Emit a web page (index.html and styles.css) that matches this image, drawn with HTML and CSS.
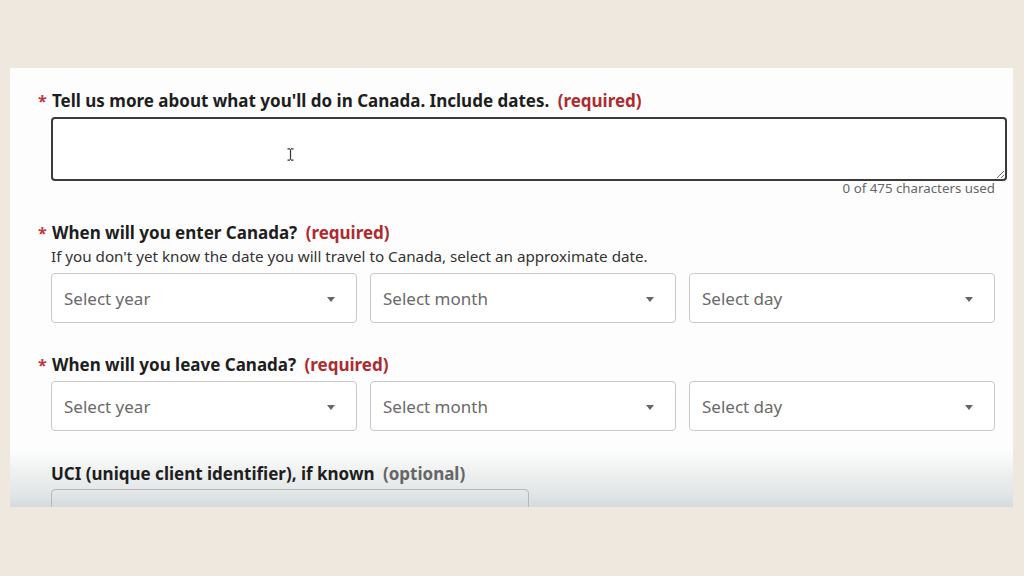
FILE: index.html
```html
<!DOCTYPE html>
<html lang="en">
<head>
<meta charset="utf-8">
<title>Visit details</title>
<link rel="stylesheet" href="styles.css">
</head>
<body>
<main class="panel">
  <div class="form">
    <div class="group">
      <label class="label" for="purpose"><span class="star">*</span>Tell us more about what you'll do in Canada. Include dates. <span class="req">(required)</span></label>
      <textarea id="purpose" class="textarea"></textarea>
      <div class="count">0 of 475 characters used</div>
    </div>

    <div class="group gap-lg">
      <div class="label"><span class="star">*</span>When will you enter Canada? <span class="req">(required)</span></div>
      <div class="hint">If you don't yet know the date you will travel to Canada, select an approximate date.</div>
      <div class="selects hinted">
        <div class="select"><span>Select year</span><svg class="caret" width="8" height="5" viewBox="0 0 8 5"><path d="M0 0h8L4 5z"/></svg></div>
        <div class="select"><span>Select month</span><svg class="caret" width="8" height="5" viewBox="0 0 8 5"><path d="M0 0h8L4 5z"/></svg></div>
        <div class="select"><span>Select day</span><svg class="caret" width="8" height="5" viewBox="0 0 8 5"><path d="M0 0h8L4 5z"/></svg></div>
      </div>
    </div>

    <div class="group gap-xl">
      <div class="label"><span class="star">*</span>When will you leave Canada? <span class="req">(required)</span></div>
      <div class="selects">
        <div class="select"><span>Select year</span><svg class="caret" width="8" height="5" viewBox="0 0 8 5"><path d="M0 0h8L4 5z"/></svg></div>
        <div class="select"><span>Select month</span><svg class="caret" width="8" height="5" viewBox="0 0 8 5"><path d="M0 0h8L4 5z"/></svg></div>
        <div class="select"><span>Select day</span><svg class="caret" width="8" height="5" viewBox="0 0 8 5"><path d="M0 0h8L4 5z"/></svg></div>
      </div>
    </div>

    <div class="group gap-xxl">
      <div class="label">UCI (unique client identifier), if known <span class="opt">(optional)</span></div>
      <div class="input"></div>
    </div>
  </div>

  <svg class="ibeam" width="7" height="13" viewBox="0 0 7 13"><path d="M0.5 0.8h2.5M4 0.8h2.5M3.5 1.2v10.6M0.5 12.2h2.5M4 12.2h2.5" stroke="#333" stroke-width="1.2" fill="none"/></svg>
</main>
</body>
</html>
```

FILE: styles.css
```css
* { box-sizing: border-box; }

html, body {
  margin: 0;
  padding: 0;
}

body {
  background: #efe8de;
  font-family: "Noto Sans", "Open Sans", sans-serif;
  color: #222;
  width: 1024px;
  height: 576px;
  overflow: hidden;
  padding: 68px 11px 0 10px;
}

.panel {
  position: relative;
  height: 439px;
  overflow: hidden;
  padding: 20px 6px 0 41px;
  background: linear-gradient(to bottom, #fdfdfd 0, #fdfdfd 382px, #eef0f0 405px, #e2e6e7 425px, #d4dbde 439px);
}

.form {
  display: flex;
  flex-direction: column;
  width: 956px;
}

.group {
  display: flex;
  flex-direction: column;
}

.gap-lg { margin-top: 25px; }
.gap-xl { margin-top: 29px; }
.gap-xxl { margin-top: 30px; }

.label {
  font-size: 17px;
  font-weight: 700;
  line-height: 24px;
  padding-top: 1px;
  color: #1e1e1e;
  white-space: pre;
  display: block;
}

.star {
  display: inline-block;
  width: 14px;
  margin-left: -13px;
  color: #c0353a;
  font-weight: 700;
  font-size: 16px;
}

.req {
  color: #ad2b30;
  margin-left: 4px;
}

.opt {
  color: #666;
  margin-left: 4px;
}

.textarea {
  margin-top: 4px;
  width: 956px;
  height: 64px;
  border: 2px solid #3a3a3a;
  border-radius: 4px;
  background: #fff;
  resize: vertical;
  font-family: inherit;
  display: block;
}

.count {
  width: 944px;
  text-align: right;
  font-size: 13.3px;
  line-height: 14px;
  color: #666;
  margin-top: 0;
}

.hint {
  font-size: 15.2px;
  line-height: 22px;
  color: #333;
}

.selects {
  margin-top: 4px;
  width: 944px;
  display: grid;
  grid-template-columns: repeat(3, 1fr);
  gap: 13px;
}

.selects.hinted { margin-top: 6px; }

.select {
  height: 50px;
  border: 1px solid #c8c8c8;
  border-radius: 4px;
  background: #fff;
  display: flex;
  align-items: center;
  justify-content: space-between;
  padding: 0 21px 0 12px;
  font-size: 17px;
  color: #6a6a6a;
}

.caret { fill: #666; margin-top: 2px; }

.input {
  margin-top: 3px;
  width: 478px;
  height: 40px;
  border: 1px solid #b8b8b8;
  border-radius: 4px;
  background: transparent;
}

.ibeam {
  position: absolute;
  left: 277px;
  top: 80px;
}
```
